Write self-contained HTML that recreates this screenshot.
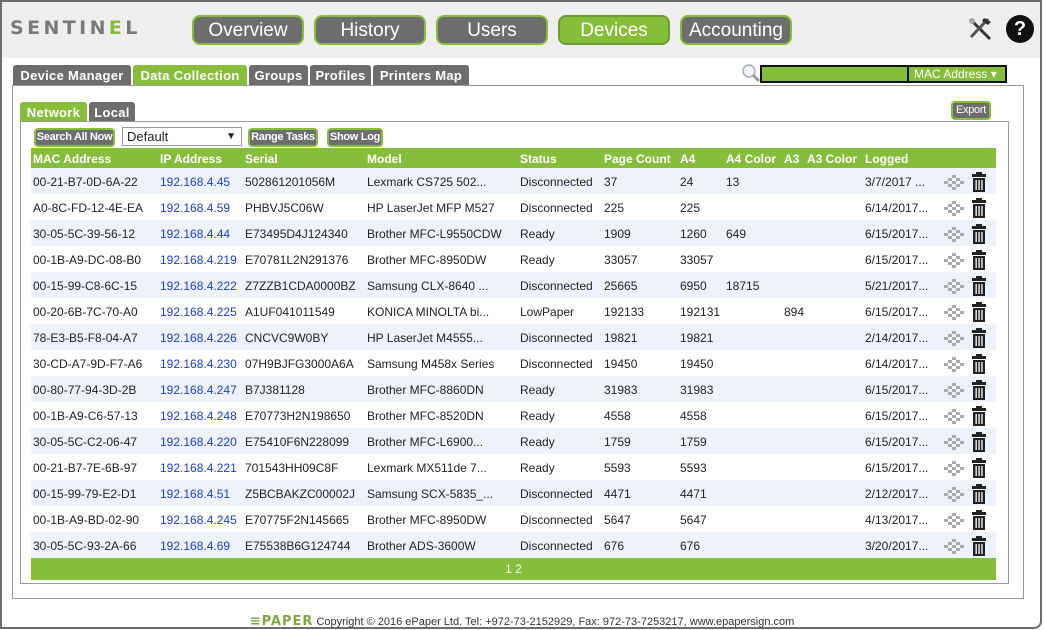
<!DOCTYPE html>
<html><head><meta charset="utf-8"><style>
*{box-sizing:border-box;margin:0;padding:0}
body{width:1044px;height:630px;background:#fff;font-family:"Liberation Sans",sans-serif;position:relative;overflow:hidden;color:#222}
.frame{position:absolute;left:0;top:0;width:1042px;height:629px;border:2px solid #6d6d6d;border-radius:0 0 8px 0;background:#fff}
.hdr{position:absolute;left:2px;top:2px;width:1038px;height:56px;background:#efefef}
.logo{position:absolute;left:10px;top:17px;font-weight:bold;font-size:19px;letter-spacing:3.4px;color:#7a7a7a;font-family:"DejaVu Sans",sans-serif}
.nav{position:absolute;top:15px;height:30px;border:2px solid #86bd3b;border-radius:8px;background:#6d6d6d;color:#fff;font-size:19px;text-align:center;line-height:28px}
.nav.on{background:#86bd3b;border-color:#6d9c2f}
.tab{position:absolute;top:65px;height:20px;background:#6d6d6d;color:#fff;font-size:13px;font-weight:bold;line-height:21px;text-align:center;border-radius:3px 3px 0 0;letter-spacing:.3px}
.tab.on{background:#86bd3b}
.panel{position:absolute;left:12px;top:85px;width:1012px;height:514px;border:1px solid #999}
.inner{position:absolute;left:20px;top:121px;width:989px;height:463px;border:1px solid #999}
.btn{position:absolute;top:128px;height:19px;background:#6d6d6d;color:#fff;border:2px solid #86bd3b;border-radius:4px;font-size:11px;font-weight:bold;line-height:15px;text-align:center;letter-spacing:-.3px}
table{position:absolute;left:31px;top:148px;width:965px;border-collapse:collapse;font-size:12px}
th{background:#86bd3b;color:#fff;text-align:left;height:20px;font-size:12px;padding:1px 0 0 2px;white-space:nowrap}
td{height:26px;padding:2px 0 0 2px;white-space:nowrap;color:#222}
tr.b td{background:#eef2fb}
td.ip{color:#1a3fd0}
.ft{position:absolute;left:31px;top:558px;width:965px;height:22px;background:#86bd3b;color:#fff;font-size:12px;text-align:center;line-height:22px}
.dots{display:inline-block;width:22px;height:16px;vertical-align:middle}
</style></head><body>
<div class="frame"></div>
<div class="hdr"></div>
<div class="logo">SENTIN<span style="color:#86bd3b">E</span>L</div>
<div class="nav" style="left:192px;width:112px">Overview</div>
<div class="nav" style="left:314px;width:112px">History</div>
<div class="nav" style="left:436px;width:112px">Users</div>
<div class="nav on" style="left:558px;width:112px">Devices</div>
<div class="nav" style="left:680px;width:112px">Accounting</div>
<svg style="position:absolute;left:966px;top:15px" width="28" height="28" viewBox="0 0 28 28"><path d="M4 4 L24 24" stroke="#333" stroke-width="3"/><path d="M22 4 L5 22" stroke="#555" stroke-width="3"/><path d="M18 3 l7 4 -3 3 -6 -4z" fill="#333"/><circle cx="6" cy="6" r="3" fill="#aaa"/></svg>
<div style="position:absolute;left:1006px;top:15px;width:28px;height:28px;border-radius:50%;background:#111;color:#fff;font-weight:bold;font-size:20px;text-align:center;line-height:28px">?</div>
<div class="tab" style="left:13px;width:118px">Device Manager</div>
<div class="tab on" style="left:133px;width:114px">Data Collection</div>
<div class="tab" style="left:249px;width:59px">Groups</div>
<div class="tab" style="left:310px;width:61px">Profiles</div>
<div class="tab" style="left:373px;width:96px">Printers Map</div>
<svg style="position:absolute;left:741px;top:63px" width="20" height="20"><circle cx="8" cy="8" r="6" fill="#eef4fa" stroke="#aab" stroke-width="1.5"/><path d="M12 12 L18 18" stroke="#999" stroke-width="3"/></svg>
<div style="position:absolute;left:760px;top:65px;width:247px;height:18px;background:#86bd3b;border:2px solid #111"></div>
<div style="position:absolute;left:907px;top:65px;width:100px;height:18px;border-left:2px solid #111;color:#fff;font-size:12px;line-height:18px;padding-left:5px">MAC Address ▾</div>
<div class="panel"></div>
<div class="tab on" style="left:20px;top:102px;width:67px;height:19px">Network</div>
<div class="tab" style="left:89px;top:102px;width:46px;height:19px">Local</div>
<div class="btn" style="left:951px;top:101px;width:40px;font-weight:normal">Export</div>
<div class="inner"></div>
<div class="btn" style="left:34px;width:81px">Search All Now</div>
<div style="position:absolute;left:122px;top:127px;width:120px;height:19px;border:1px solid #999;font-size:13px;line-height:17px;padding-left:4px;background:#fff">Default<span style="position:absolute;right:5px;font-size:10px">▼</span></div>
<div class="btn" style="left:248px;width:70px">Range Tasks</div>
<div class="btn" style="left:327px;width:56px">Show Log</div>
<table>
<colgroup><col style="width:127px"><col style="width:85px"><col style="width:122px"><col style="width:153px"><col style="width:84px"><col style="width:76px"><col style="width:46px"><col style="width:58px"><col style="width:23px"><col style="width:58px"><col style="width:78px"><col style="width:28px"><col style="width:27px"></colgroup>
<tr><th>MAC Address</th><th>IP Address</th><th>Serial</th><th>Model</th><th>Status</th><th>Page Count</th><th>A4</th><th>A4 Color</th><th>A3</th><th>A3 Color</th><th>Logged</th><th></th><th></th></tr>
</table>
<div class="ft">1 2</div>
<div style="position:absolute;left:0;top:614px;width:1044px;text-align:center;font-size:11px;color:#333"><b style="color:#7fa844;font-size:13px;letter-spacing:1px;font-family:'DejaVu Sans',sans-serif">≡PAPER</b> Copyright © 2016 ePaper Ltd. Tel: +972-73-2152929, Fax: 972-73-7253217, www.epapersign.com</div>
<script>
var d=[["00-21-B7-0D-6A-22","192.168.4.45","502861201056M","Lexmark CS725 502...","Disconnected","37","24","13","","","3/7/2017 ..."],
["A0-8C-FD-12-4E-EA","192.168.4.59","PHBVJ5C06W","HP LaserJet MFP M527","Disconnected","225","225","","","","6/14/2017..."],
["30-05-5C-39-56-12","192.168.4.44","E73495D4J124340","Brother MFC-L9550CDW","Ready","1909","1260","649","","","6/15/2017..."],
["00-1B-A9-DC-08-B0","192.168.4.219","E70781L2N291376","Brother MFC-8950DW","Ready","33057","33057","","","","6/15/2017..."],
["00-15-99-C8-6C-15","192.168.4.222","Z7ZZB1CDA0000BZ","Samsung CLX-8640 ...","Disconnected","25665","6950","18715","","","5/21/2017..."],
["00-20-6B-7C-70-A0","192.168.4.225","A1UF041011549","KONICA MINOLTA bi...","LowPaper","192133","192131","","894","","6/15/2017..."],
["78-E3-B5-F8-04-A7","192.168.4.226","CNCVC9W0BY","HP LaserJet M4555...","Disconnected","19821","19821","","","","2/14/2017..."],
["30-CD-A7-9D-F7-A6","192.168.4.230","07H9BJFG3000A6A","Samsung M458x Series","Disconnected","19450","19450","","","","6/14/2017..."],
["00-80-77-94-3D-2B","192.168.4.247","B7J381128","Brother MFC-8860DN","Ready","31983","31983","","","","6/15/2017..."],
["00-1B-A9-C6-57-13","192.168.4.248","E70773H2N198650","Brother MFC-8520DN","Ready","4558","4558","","","","6/15/2017..."],
["30-05-5C-C2-06-47","192.168.4.220","E75410F6N228099","Brother MFC-L6900...","Ready","1759","1759","","","","6/15/2017..."],
["00-21-B7-7E-6B-97","192.168.4.221","701543HH09C8F","Lexmark MX511de 7...","Ready","5593","5593","","","","6/15/2017..."],
["00-15-99-79-E2-D1","192.168.4.51","Z5BCBAKZC00002J","Samsung SCX-5835_...","Disconnected","4471","4471","","","","2/12/2017..."],
["00-1B-A9-BD-02-90","192.168.4.245","E70775F2N145665","Brother MFC-8950DW","Disconnected","5647","5647","","","","4/13/2017..."],
["30-05-5C-93-2A-66","192.168.4.69","E75538B6G124744","Brother ADS-3600W","Disconnected","676","676","","","","3/20/2017..."]];
var dots='<svg class="dots" viewBox="0 0 22 16"><g fill="#aaa"><rect x="9" y="1" width="4" height="3"/><rect x="5" y="4" width="4" height="3"/><rect x="13" y="4" width="4" height="3"/><rect x="1" y="7" width="4" height="3"/><rect x="9" y="7" width="4" height="3"/><rect x="17" y="7" width="4" height="3"/><rect x="5" y="10" width="4" height="3"/><rect x="13" y="10" width="4" height="3"/><rect x="9" y="13" width="4" height="3"/></g></svg>';
var trash='<svg width="16" height="20" viewBox="0 0 16 20" style="vertical-align:middle"><rect x="5" y="0" width="6" height="2" fill="#222"/><rect x="1" y="2" width="14" height="3" fill="#222"/><rect x="2" y="6" width="12" height="14" fill="#222"/><g fill="#fff"><rect x="4.5" y="8" width="1.3" height="10"/><rect x="7.4" y="8" width="1.3" height="10"/><rect x="10.3" y="8" width="1.3" height="10"/></g></svg>';
var t=document.querySelector('table'),h='';
d.forEach(function(r,i){h+='<tr class="'+(i%2==0?'b':'')+'">';r.forEach(function(c,j){h+='<td'+(j==1?' class="ip"':'')+'>'+c+'</td>'});h+='<td>'+dots+'</td><td>'+trash+'</td></tr>'});
t.insertAdjacentHTML('beforeend',h);
</script>
</body></html>
